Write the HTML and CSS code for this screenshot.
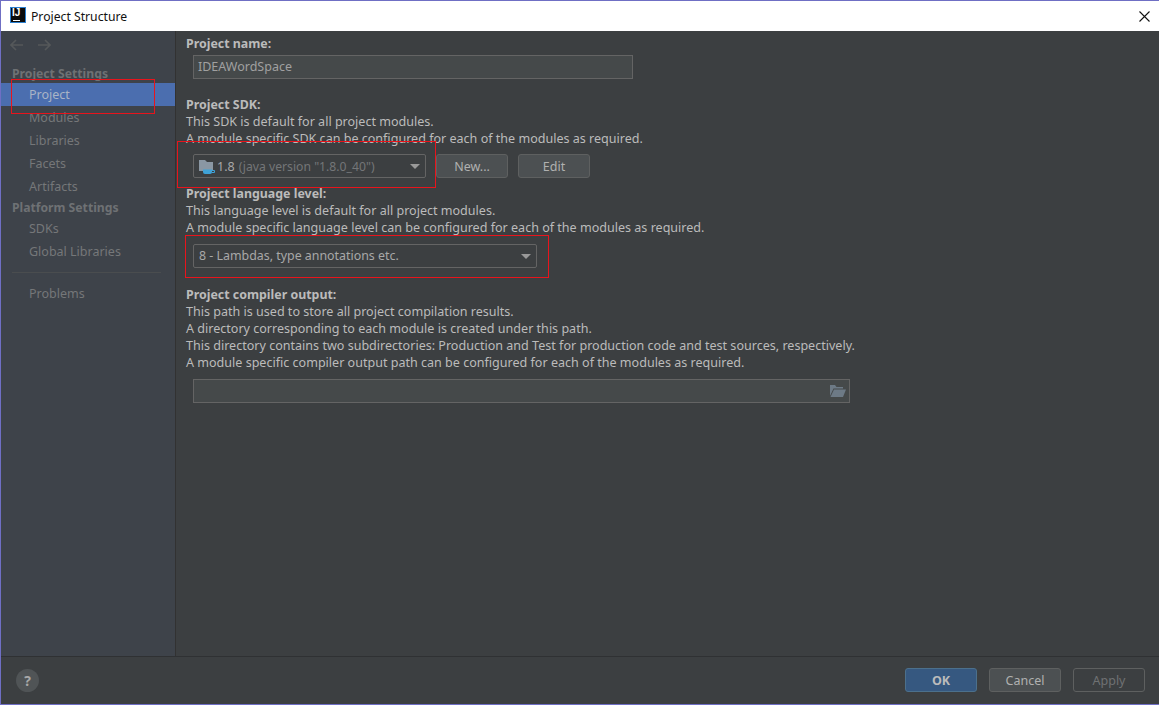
FILE: index.html
```html
<!DOCTYPE html>
<html lang="en">
<head>
<meta charset="utf-8">
<title>Project Structure</title>
<link rel="stylesheet" href="styles.css">
</head>
<body>
<div class="window">
  <header class="titlebar">
    <div class="app-icon"><span class="app-letters">IJ</span><span class="app-dash"></span></div>
    <span class="title">Project Structure</span>
    <svg class="close" width="11" height="11" viewBox="0 0 11 11"><path d="M0.500 0.500l10 10M10.500 0.500l-10 10" stroke="#111" stroke-width="1.1" fill="none"/></svg>
  </header>
  <div class="body">
    <aside class="sidebar">
      <div class="nav-arrows">
        <svg width="14" height="12" viewBox="0 0 14 12"><path d="M1 6h12M6 1L1 6l5 5" stroke="#55585a" stroke-width="1.6" fill="none"/></svg>
        <svg width="14" height="12" viewBox="0 0 14 12"><path d="M13 6H1M8 1l5 5-5 5" stroke="#55585a" stroke-width="1.6" fill="none"/></svg>
      </div>
      <div class="group first">Project Settings</div>
      <div class="item selected">Project</div>
      <div class="item">Modules</div>
      <div class="item">Libraries</div>
      <div class="item">Facets</div>
      <div class="item">Artifacts</div>
      <div class="group second">Platform Settings</div>
      <div class="item">SDKs</div>
      <div class="item">Global Libraries</div>
      <div class="divider"></div>
      <div class="item">Problems</div>
    </aside>
    <main class="content">
      <h2 class="label">Project name:</h2>
      <div class="field name-field">IDEAWordSpace</div>

      <h2 class="label sdk-label">Project SDK:</h2>
      <p class="text">This SDK is default for all project modules.</p>
      <p class="text">A module specific SDK can be configured for each of the modules as required.</p>
      <div class="sdk-row">
        <div class="combo sdk-combo">
          <svg class="sdk-icon" width="17" height="16" viewBox="0 0 17 16"><path d="M0 2h6l2 2h6v9H0z" fill="#8a97a3"/><path d="M4 11.500h9v2.500a2 2 0 0 1-2 2H6a2 2 0 0 1-2-2z" fill="#3fa3d8"/><path d="M13 12.500h2.500v2H13" stroke="#3fa3d8" fill="none"/></svg>
          <span class="sdk-version">1.8</span><span class="sdk-detail">(java version "1.8.0_40")</span>
          <span class="arrow"></span>
        </div>
        <div class="btn">New...</div>
        <div class="btn">Edit</div>
      </div>

      <h2 class="label lang-label">Project language level:</h2>
      <p class="text">This language level is default for all project modules.</p>
      <p class="text">A module specific language level can be configured for each of the modules as required.</p>
      <div class="combo lang-combo">8 - Lambdas, type annotations etc.<span class="arrow"></span></div>

      <h2 class="label out-label">Project compiler output:</h2>
      <p class="text">This path is used to store all project compilation results.</p>
      <p class="text">A directory corresponding to each module is created under this path.</p>
      <p class="text">This directory contains two subdirectories: Production and Test for production code and test sources, respectively.</p>
      <p class="text">A module specific compiler output path can be configured for each of the modules as required.</p>
      <div class="field out-field">
        <svg width="16" height="12" viewBox="0 0 16 12"><path d="M0 0h5l1.500 2H13v1.500H3.500L0 11z" fill="#6d7a86"/><path d="M4 4.500h12L13 12H0.500z" fill="#6d7a86"/></svg>
      </div>
    </main>
  </div>
  <footer class="footer">
    <div class="help">?</div>
    <div class="actions">
      <div class="btn primary">OK</div>
      <div class="btn">Cancel</div>
      <div class="btn disabled">Apply</div>
    </div>
  </footer>
  <div class="mark mark-project"></div>
  <div class="mark mark-sdk"></div>
  <div class="mark mark-lang"></div>
</div>
</body>
</html>
```
FILE: styles.css
```css
* { box-sizing: border-box; }
html, body { margin: 0; height: 100%; }
body { font-family: "Noto Sans", "Open Sans", sans-serif; font-size: 12.5px; background: #3c3f41; }
.window { position: relative; width: 1159px; height: 705px; display: flex; flex-direction: column; border: 1px solid #6f6fc4; border-right: 0; background: #3c3f41; color: #bbb; overflow: hidden; }
.titlebar { height: 30px; flex: none; background: #fff; display: flex; align-items: center; padding: 0 8px 0 9px; color: #111; }
.app-icon { position: relative; width: 16px; height: 16px; background: #0b0b0b; border: 1px solid #2a7fd0; margin: -2px 5px 0 0; }
.app-letters { position: absolute; left: 1px; top: 0; font: bold 10px/10px "Liberation Sans", sans-serif; color: #fff; }
.app-dash { position: absolute; left: 2px; bottom: 1px; width: 7px; height: 1px; background: #fff; }
.title { font-size: 12.2px; }
.close { margin-left: auto; margin-right: 1px; }
.body { flex: 1; display: flex; min-height: 0; }
.sidebar { width: 175px; flex: none; background: #3e434a; border-right: 1px solid #323232; padding-top: 8px; }
.nav-arrows { display: flex; gap: 13px; padding-left: 9px; height: 12px; }
.group { font-size: 12.2px; font-weight: 700; color: #6e7174; padding-left: 11px; line-height: 17px; height: 17px; }
.group.first { margin-top: 14px; margin-bottom: 1px; }
.group.second { margin-top: 1px; margin-bottom: 1px; }
.item { height: 23px; line-height: 23px; padding-left: 28px; color: #757779; }
.selected { background: #4b6eaf; color: #a9b4c6; }
.divider { height: 1px; margin: 9px 14px 9px 11px; background: #4a4d4f; }
.content { flex: 1; padding: 4px 0 0 10px; min-width: 0; }
.label { margin: 0; font-size: 12.4px; font-weight: 700; line-height: 17px; color: #bbb; }
.text { margin: 0; font-size: 12.55px; line-height: 17px; color: #bbb; }
.field { height: 24px; background: #45494a; border: 1px solid #646464; color: #a0a0a0; display: flex; align-items: center; padding-left: 4px; margin-left: 7px; }
.name-field { width: 440px; margin-top: 3px; padding-bottom: 2px; }
.sdk-label { margin-top: 17px; }
.sdk-row { display: flex; gap: 10px; margin: 7px 0 0 7px; }
.combo { position: relative; height: 24px; display: flex; align-items: center; border: 1px solid #646464; border-radius: 2px; background: #3c3f41; padding-left: 5px; color: #a8a8a8; }
.sdk-combo { width: 233px; }
.sdk-icon { margin-right: 1px; }
.sdk-version { margin-right: 4px; }
.sdk-detail { font-size: 12.2px; color: #747678; }
.arrow { position: absolute; right: 5px; top: 9px; width: 0; height: 0; border: 5px solid transparent; border-top: 5px solid #999; border-bottom: 0; }
.btn { width: 72px; height: 24px; border: 1px solid #5e6060; border-radius: 3px; background: #4c5052; color: #b0b0b0; display: flex; align-items: center; justify-content: center; }
.lang-label { margin-top: 7px; }
.lang-combo { width: 344px; margin: 8px 0 0 7px; padding-bottom: 2px; font-size: 12.4px; }
.out-label { margin-top: 18px; }
.out-field { width: 657px; margin-top: 8px; justify-content: flex-end; padding-right: 3px; background: #45494a; }
.footer { height: 48px; flex: none; border-top: 1px solid #2f3133; display: flex; align-items: center; justify-content: space-between; padding: 0 14px 1px 15px; }
.help { width: 23px; height: 23px; border-radius: 50%; background: #505456; color: #a8a8a8; font-weight: 700; font-size: 14px; display: flex; align-items: center; justify-content: center; }
.actions { display: flex; gap: 12px; }
.primary { background: #365880; border-color: #4c708c; color: #bbb; font-weight: 700; }
.disabled { background: #3c3f41; border-color: #5e6060; color: #6f7173; }
.mark { position: absolute; border: 1px solid #e8141c; pointer-events: none; }
.mark-project { left: 10px; top: 78px; width: 144px; height: 35px; }
.mark-sdk { left: 176px; top: 140px; width: 259px; height: 47px; }
.mark-lang { left: 184px; top: 234px; width: 364px; height: 43px; }
```
